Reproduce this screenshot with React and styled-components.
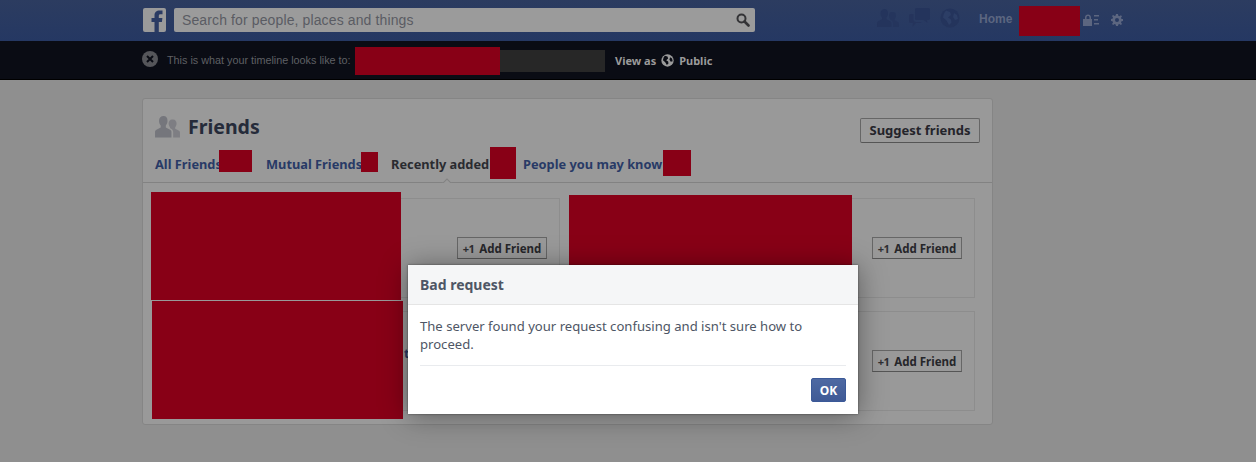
import React from 'react'
import styled, { createGlobalStyle } from 'styled-components'

const GlobalStyle = createGlobalStyle`
  html, body {
    margin: 0;
    padding: 0;
    background: #8f8f8f;
  }
  body {
    font-family: "Noto Sans", Arial, sans-serif;
    overflow: hidden;
  }
`

const Page = styled.div`
  position: relative;
  width: 1256px;
  height: 462px;
  overflow: hidden;
  background: #8f8f8f;
`

const TopBar = styled.header`
  height: 41px;
  box-sizing: border-box;
  padding: 8px 0 0 143px;
  display: flex;
  align-items: flex-start;
  background: linear-gradient(#2c3c60, #253863);
`

const SearchBox = styled.div`
  width: 581px;
  height: 24px;
  margin-left: 8px;
  box-sizing: border-box;
  padding: 0 5px 0 8px;
  display: flex;
  align-items: center;
  justify-content: space-between;
  background: #9b9b9b;
  border-radius: 2px;
  color: #5a5c63;
  font: 14px "Liberation Sans", sans-serif;
  letter-spacing: 0.12px;
`

const NavIcons = styled.div`
  display: flex;
  align-items: center;
  gap: 10px;
  margin-left: 122px;
  color: #24345c;
`

const HomeLink = styled.span`
  margin-left: 19px;
  margin-top: 4px;
  font: bold 12px "Liberation Sans", sans-serif;
  color: #5c6680;
`

const RightIcons = styled.div`
  display: flex;
  align-items: center;
  gap: 12px;
  margin-left: 71px;
  margin-top: 6px;
  color: #5c6680;
`

const ViewBar = styled.div`
  height: 39px;
  box-sizing: border-box;
  padding: 0 0 0 142px;
  display: flex;
  align-items: center;
  background: #0a0c14;
  border-bottom: 1px solid #000;
`

const CloseDot = styled.span`
  width: 16px;
  height: 16px;
  border-radius: 50%;
  margin-top: -2px;
  background: #55565a;
  color: #0a0c14;
  display: flex;
  align-items: center;
  justify-content: center;
`

const ViewText = styled.span`
  margin-left: 9px;
  width: 188px;
  font: 10.8px "Liberation Sans", sans-serif;
  color: #5f6064;
  white-space: nowrap;
`

const ViewField = styled.div`
  width: 250px;
  height: 22px;
  margin-top: 1px;
  background: #272727;
`

const ViewAs = styled.span`
  margin-left: 10px;
  display: flex;
  align-items: center;
  gap: 5px;
  font-size: 11px;
  font-weight: bold;
  color: #9b9b9b;
`

const Card = styled.section`
  width: 851px;
  height: 327px;
  margin: 18px 0 0 142px;
  box-sizing: border-box;
  background: #999;
  border: 1px solid #858585;
  border-radius: 3px;
`

const CardHead = styled.div`
  height: 84px;
  box-sizing: border-box;
  padding: 0 12px;
  position: relative;
  border-bottom: 1px solid #828282;
`

const TitleRow = styled.div`
  display: flex;
  align-items: flex-start;
  justify-content: space-between;
  padding-top: 16px;
`

const Title = styled.h1`
  margin: 0;
  display: flex;
  align-items: center;
  gap: 8px;
  font-size: 19.5px;
  line-height: 24px;
  font-weight: bold;
  color: #252b3a;
`

const SuggestButton = styled.button`
  height: 25px;
  width: 120px;
  margin-top: 3px;
  padding: 0 0 2px;
  font: bold 13px "Noto Sans", sans-serif;
  color: #24242a;
  background: #9a9a9a;
  border: 1px solid #666;
  border-bottom-color: #555;
  border-radius: 2px;
`

const Tabs = styled.nav`
  display: flex;
  margin-top: 13px;
`

const Tab = styled.span`
  width: ${p => p.$w}px;
  font: bold 12.8px/16px "Noto Sans", sans-serif;
  white-space: nowrap;
  color: ${p => (p.$active ? '#2a2b30' : '#283a66')};
`

const TabCaret = styled.span`
  position: absolute;
  left: 299px;
  bottom: -1px;
  width: 10px;
  height: 5px;
  overflow: hidden;
  &::after {
    content: '';
    display: block;
    width: 8px;
    height: 8px;
    margin: 2px 0 0 1px;
    box-sizing: border-box;
    background: #999;
    border: 1px solid #828282;
    transform: rotate(45deg);
  }
`

const FriendGrid = styled.div`
  display: grid;
  grid-template-columns: 406px 406px;
  grid-auto-rows: 100px;
  column-gap: 9px;
  row-gap: 13px;
  padding: 15px 0 0 11px;
`

const FriendTile = styled.div`
  box-sizing: border-box;
  border: 1px solid #8d8d8d;
  display: flex;
  align-items: center;
  justify-content: flex-end;
  padding: 0 12px 0 0;
`

const FriendName = styled.span`
  margin: -16px auto 0 249px;
  font: bold 12px "Noto Sans", sans-serif;
  color: #283a66;
`

const AddButton = styled.button`
  width: 90px;
  height: 22px;
  padding: 0;
  display: flex;
  align-items: center;
  justify-content: center;
  gap: 5px;
  font: bold 11.5px "Noto Sans", sans-serif;
  color: #26262a;
  background: #999;
  border: 1px solid #666;
  border-bottom-color: #555;
`

const PlusOne = styled.span`
  font: bold 11px "Noto Sans", sans-serif;
  color: #2e2e32;
  letter-spacing: -0.5px;
`

const Redaction = styled.div`
  position: absolute;
  left: ${p => p.$x}px;
  top: ${p => p.$y}px;
  width: ${p => p.$w}px;
  height: ${p => p.$h}px;
  background: #880016;
`

const Dialog = styled.div`
  position: absolute;
  left: 408px;
  top: 265px;
  width: 450px;
  height: 149px;
  background: #fff;
  box-shadow: 0 2px 26px rgba(0, 0, 0, 0.4), 0 0 2px rgba(0, 0, 0, 0.5);
`

const DialogHead = styled.div`
  height: 40px;
  box-sizing: border-box;
  padding: 0 12px;
  display: flex;
  align-items: center;
  background: #f5f6f7;
  border-bottom: 1px solid #e5e5e5;
  font: bold 14px "Noto Sans", sans-serif;
  color: #4e5665;
`

const DialogBody = styled.div`
  margin: 0 12px;
  height: 61px;
  padding-top: 12px;
  box-sizing: border-box;
  border-bottom: 1px solid #e9ebee;
  font: 13.1px/18px "Noto Sans", sans-serif;
  color: #4e5665;
`

const DialogFoot = styled.div`
  display: flex;
  justify-content: flex-end;
  padding: 12px 12px 0;
`

const OkButton = styled.button`
  width: 35px;
  height: 24px;
  padding: 0;
  font: bold 12px "Noto Sans", sans-serif;
  color: #fff;
  background: linear-gradient(#4e69a2, #3f5a96);
  border: 1px solid #3b5998;
  border-radius: 2px;
`

const LogoMark = () => (
  <svg width="23" height="24" viewBox="0 0 23 24">
    <rect width="23" height="24" rx="2" fill="#9a9a9a" />
    <path d="M11.500 24V14H8.500v-4h3V7.500C11.500 4 13.500 2.500 16.500 2.500H19.500v3.700h-2c-1.300 0-1.700.6-1.700 1.700V10h3.600l-.5 4h-3.100v10z" fill="#2a3b63" />
  </svg>
)

const SearchIcon = () => (
  <svg width="14" height="14" viewBox="0 0 14 14" fill="none" stroke="#333336">
    <circle cx="5.500" cy="5.500" r="4" strokeWidth="2" />
    <path d="M8.500 8.500l4 4" strokeWidth="2.600" strokeLinecap="round" />
  </svg>
)

const PeopleIcon = ({ width = 22, color = 'currentColor' }) => (
  <svg width={width} height={width * 0.86} viewBox="0 0 22 19" fill={color}>
    <path d="M7.500 0c2.300 0 3.500 1.800 3.500 4.200 0 1.800-.6 3.300-1.500 4.200v1.800l3.800 2c.9.500 1.200 1.200 1.200 2V19H0v-4.800c0-.8.300-1.500 1.200-2l3.800-2V8.400C4.100 7.500 3.500 6 3.500 4.200 3.500 1.800 5.200 0 7.500 0z" />
    <path d="M16 3c1.900 0 3 1.500 3 3.500 0 1.500-.5 2.700-1.200 3.400v1.300l3 1.600c.8.400 1.200 1 1.200 1.800V19h-6v-4.800c0-1.500-.7-2.400-1.900-3l-.9-.5V9.900c-.7-.7-1.200-1.900-1.200-3.400 0-2 1.100-3.500 3-3.500z" opacity="0.75" />
  </svg>
)

const ChatIcon = () => (
  <svg width="21" height="20" viewBox="0 0 21 20" fill="currentColor">
    <path d="M6 1.500C6 .7 6.700 0 7.500 0h12c.8 0 1.500.7 1.500 1.500v9c0 .8-.7 1.500-1.500 1.500H18l.5 3-4-3h-7C6.700 12 6 11.300 6 10.500z" />
    <path d="M4.500 6v5.500c0 1.400 1 2.500 2.500 2.500h5.500l-1 1H7l-3.500 4 .5-4H1.500C.7 15 0 14.300 0 13.500v-6C0 6.700.7 6 1.500 6z" opacity="0.85" />
  </svg>
)

const GlobeIcon = ({ size = 20, color = 'currentColor', land = '#2c3e66' }) => (
  <svg width={size} height={size} viewBox="0 0 20 20">
    <circle cx="10" cy="10" r="9.500" fill={color} />
    <path d="M6 2.500l4 1.500 1 3-3 2.500 3 2 .5 3L9 17 6.500 12.500 3 9.500l1-4z" fill={land} />
    <path d="M14 5l3 2 1 4-3 1-2-3z" fill={land} />
  </svg>
)

const LockIcon = () => (
  <svg width="16" height="12" viewBox="0 0 16 12" fill="currentColor">
    <path d="M2 5V3.500C2 1.500 3.300.5 5 .5s3 1 3 3V5h1v7H0V5zm1.500 0h3V3.500c0-1-.6-1.600-1.500-1.600s-1.500.6-1.500 1.600z" />
    <path d="M11 1h5v1.600h-5zM11 5h4v1.600h-4zM11 9h5v1.600h-5z" />
  </svg>
)

const GearIcon = () => (
  <svg width="12" height="12" viewBox="0 0 12 12" fill="currentColor">
    <path d="M5 0h2l.3 1.700 1.100.5L9.900 1.200l1.100 1.100-1 1.500.5 1.100L12 5v2l-1.500.3-.5 1.100 1 1.500-1.100 1.100-1.500-1-1.100.5L7 12H5l-.3-1.500-1.100-.5-1.500 1L1 9.900l1-1.500-.5-1.100L0 7V5l1.500-.3.500-1.100-1-1.500L2.100 1l1.500 1 1.100-.5zM6 4a2 2 0 100 4 2 2 0 000-4z" fillRule="evenodd" />
  </svg>
)

// only the tail of one name sticks out from behind the red blocks
const friends = [
  { id: 0 },
  { id: 1 },
  { id: 2, tail: 't' },
  { id: 3 },
]

const redactions = [
  { x: 1019, y: 6, w: 61, h: 30 },
  { x: 355, y: 47, w: 145, h: 28 },
  { x: 219, y: 150, w: 33, h: 22 },
  { x: 361, y: 152, w: 17, h: 20 },
  { x: 490, y: 147, w: 26, h: 32 },
  { x: 663, y: 150, w: 28, h: 26 },
  { x: 151, y: 192, w: 250, h: 108 },
  { x: 569, y: 195, w: 283, h: 70 },
  { x: 152, y: 301, w: 251, h: 118 },
]

export default function App() {
  return (
    <Page>
      <GlobalStyle />
      <TopBar>
        <LogoMark />
        <SearchBox>
          Search for people, places and things
          <SearchIcon />
        </SearchBox>
        <NavIcons>
          <PeopleIcon />
          <ChatIcon />
          <GlobeIcon />
        </NavIcons>
        <HomeLink>Home</HomeLink>
        <RightIcons>
          <LockIcon />
          <GearIcon />
        </RightIcons>
      </TopBar>
      <ViewBar>
        <CloseDot>
          <svg width="8" height="8" viewBox="0 0 8 8" stroke="currentColor" strokeWidth="2">
            <path d="M1 1l6 6M7 1L1 7" />
          </svg>
        </CloseDot>
        <ViewText>This is what your timeline looks like to:</ViewText>
        <ViewField />
        <ViewAs>
          View as
          <GlobeIcon size={13} color="#9b9b9b" land="#0a0c14" />
          Public
        </ViewAs>
      </ViewBar>
      <Card>
        <CardHead>
          <TitleRow>
            <Title>
              <PeopleIcon width={25} color="#75767c" />
              Friends
            </Title>
            <SuggestButton>Suggest friends</SuggestButton>
          </TitleRow>
          <Tabs>
            <Tab $w={111}>All Friends</Tab>
            <Tab $w={125}>Mutual Friends</Tab>
            <Tab $w={132} $active>Recently added</Tab>
            <Tab $w={150}>People you may know</Tab>
          </Tabs>
          <TabCaret />
        </CardHead>
        <FriendGrid>
          {friends.map(f => (
            <FriendTile key={f.id}>
              {f.tail && <FriendName>{f.tail}</FriendName>}
              <AddButton>
                <PlusOne>+1</PlusOne>
                Add Friend
              </AddButton>
            </FriendTile>
          ))}
        </FriendGrid>
      </Card>
      {redactions.map(r => (
        <Redaction key={`${r.x}-${r.y}`} $x={r.x} $y={r.y} $w={r.w} $h={r.h} />
      ))}
      <Dialog>
        <DialogHead>Bad request</DialogHead>
        <DialogBody>The server found your request confusing and isn't sure how to proceed.</DialogBody>
        <DialogFoot>
          <OkButton>OK</OkButton>
        </DialogFoot>
      </Dialog>
    </Page>
  )
}
